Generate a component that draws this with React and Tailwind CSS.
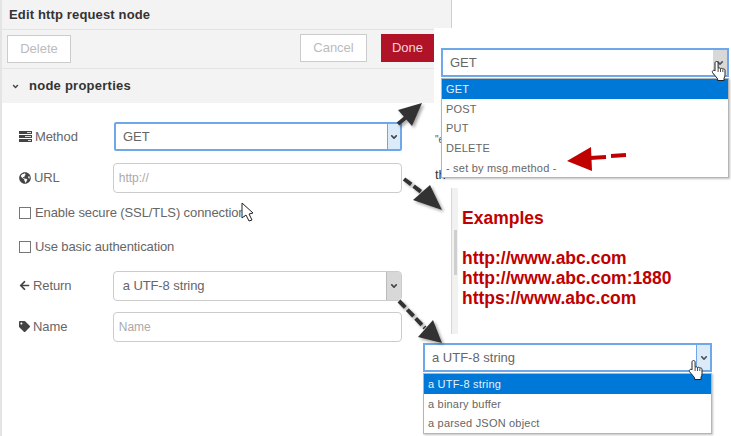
import React from "react";
import { FaGlobeAmericas, FaArrowLeft, FaTag, FaAngleDown } from "react-icons/fa";

const Hand = ({ className }) => (
  <svg className={"absolute " + className} width="17" height="22" viewBox="0 0 17 22">
    <path
      d="M5.5 1.5c1 0 1.6.7 1.6 1.6v5.2c.8-.7 2-.5 2.4.3.8-.6 2-.3 2.3.5.9-.5 2.2 0 2.2 1.2v4.4c0 1.4-.4 2.4-1 3.6v2.2H6.6v-1.8L1.8 13c-.7-.9-.6-1.9.1-2.4.8-.6 1.6-.3 2.2.3l-.1-.1V3.1c0-.9.6-1.6 1.5-1.6z"
      fill="#fff"
      stroke="#222"
      strokeWidth="1"
    />
    <path d="M7.1 8.5v3.5M9.5 8.8v3.2M11.8 9.5v2.5" stroke="#222" strokeWidth="0.8" fill="none" />
  </svg>
);

const TasksIcon = () => (
  <svg width="13" height="11" viewBox="0 0 13 11">
    <rect x="0" y="0" width="13" height="3" fill="#444" />
    <rect x="0" y="4" width="13" height="3" fill="#444" />
    <rect x="0" y="8" width="13" height="3" fill="#444" />
    <rect x="8" y="1" width="4" height="1" fill="#ddd" />
    <rect x="6" y="5" width="6" height="1" fill="#ddd" />
    <rect x="9" y="9" width="3" height="1" fill="#ddd" />
  </svg>
);

const Popout = ({ className, value, arrowClass, options }) => (
  <div className={"absolute " + className}>
    <div className="h-[29px] border-2 border-[#6fa8e8] bg-white flex items-center text-[13px] text-[#666]">
      <span className="flex-1 pl-[7px]">{value}</span>
      <div className={"w-[14px] h-full flex items-center justify-center " + arrowClass}>
        <FaAngleDown className="w-[10px] h-[10px] text-[#555]" />
      </div>
    </div>
    <div className="mt-[1px] border border-[#b5b5b5] bg-white text-[11px] tracking-[0.2px] text-[#666] shadow-[1px_1px_2px_rgba(0,0,0,0.25)]">
      {options.map((o, i) => (
        <div
          key={o}
          className={"h-[19.7px] leading-[20px] pl-[4px] " + (i === 0 ? "bg-[#0078d7] text-[#e8f2fb]" : "")}
        >
          {o}
        </div>
      ))}
    </div>
  </div>
);

const Row = ({ icon, label, children, className }) => (
  <div className={"flex items-center h-[29px] " + className}>
    <div className="w-[94px] flex items-center gap-[3px] text-[13px] tracking-[-0.1px] text-[#666]">
      {icon}
      <span>{label}</span>
    </div>
    {children}
  </div>
);

const Check = ({ label, className }) => (
  <div className={"flex items-center gap-[4px] text-[13px] tracking-[-0.1px] text-[#666] " + className}>
    <div className="w-[12px] h-[12px] border border-[#777] bg-white" />
    <span>{label}</span>
  </div>
);

export default function App() {
  return (
    <div className="relative flex w-[731px] h-[436px] overflow-hidden bg-white font-['Liberation_Sans',sans-serif]">
      {/* editor tray */}
      <div className="w-[434px] shrink-0 border-l-2 border-[#e4e4e4]">
        <div className="h-[30px] bg-[#f3f3f3] border-b border-[#e3e3e3] pl-[7px] flex items-center text-[13px] font-bold tracking-[0.15px] text-[#333]">
          Edit http request node
        </div>
        <div className="h-[39px] bg-[#f3f3f3] border-b border-[#e3e3e3] flex items-center pl-[5px]">
          <button className="w-[64px] h-[28px] border border-[#ccc] bg-white text-[13px] text-[#bbb]">Delete</button>
          <button className="ml-auto w-[67px] h-[28px] border border-[#ccc] bg-white text-[13px] text-[#bbb] -mt-[2px]">Cancel</button>
          <button className="ml-[14px] w-[53px] h-[28px] bg-[#b01327] text-[13px] text-[#f3d5d9] -mt-[2px]">Done</button>
        </div>
        <div className="h-[34px] bg-[#f3f3f3] flex items-center pl-[9px] gap-[9px] text-[13px] font-bold tracking-[0.25px] text-[#333]">
          <FaAngleDown className="w-[9px] h-[9px] text-[#444]" />
          node properties
        </div>

        <div className="pl-[17px] w-[400px] pt-[19px]">
          <Row label="Method" icon={<TasksIcon />}>
            <div className="w-[288px] h-[29px] ml-[1px] rounded-[2px] border-2 border-[#6fa8e8] bg-white flex items-center text-[13px] text-[#666]">
              <span className="flex-1 pl-[7px]">GET</span>
              <div className="w-[13px] h-full bg-[#dcebf9] border-l border-[#6fa8e8] flex items-center justify-center">
                <FaAngleDown className="w-[10px] h-[10px] text-[#444]" />
              </div>
            </div>
          </Row>
          <Row
            label="URL"
            className="mt-[12px]"
            icon={<FaGlobeAmericas className="w-[12px] h-[12px] text-[#444]" />}
          >
            <div className="w-[290px] h-[30px] rounded-[4px] border border-[#ccc] bg-white flex items-center pl-[5px] text-[12px] text-[#aaa]">
              http://
            </div>
          </Row>
          <Check label="Enable secure (SSL/TLS) connection" className="h-[15px] mt-[13px]" />
          <Check label="Use basic authentication" className="h-[15px] mt-[19px]" />
          <Row
            label="Return"
            className="mt-[17px]"
            icon={<FaArrowLeft className="w-[11px] h-[11px] text-[#444]" />}
          >
            <div className="w-[290px] h-[30px] rounded-[4px] border border-[#ccc] bg-white flex items-center text-[13px] tracking-[-0.1px] text-[#666]">
              <span className="flex-1 pl-[9px]">a UTF-8 string</span>
              <div className="w-[15px] h-full bg-[#d8d8d8] border-l border-[#bbb] rounded-r-[3px] flex items-center justify-center">
                <FaAngleDown className="w-[10px] h-[10px] text-[#444]" />
              </div>
            </div>
          </Row>
          <Row
            label="Name"
            className="mt-[12px]"
            icon={<FaTag className="w-[11px] h-[11px] text-[#444]" />}
          >
            <div className="w-[290px] h-[30px] rounded-[4px] border border-[#ccc] bg-white flex items-center pl-[5px] text-[12px] text-[#aaa]">
              Name
            </div>
          </Row>
        </div>
      </div>

      {/* examples column behind the popouts */}
      <div className="flex-1">
        <div className="h-[28px] w-[18px] bg-[#f3f3f3] border-r border-[#cfcfcf]" />
        <div className="mt-[160px] ml-[17px] flex h-[146px]">
          <div className="w-[7px] border-l border-[#d8d8d8] bg-[#f1f1f1]">
            <div className="mt-[42px] mx-auto w-[3px] h-[45px] bg-[#cfcfcf]" />
          </div>
          <div className="pl-[4px] pt-[20px] text-[17.5px] leading-[20px] font-bold text-[#c00000]">
            <div className="mb-[20px]">Examples</div>
            <div>http://www.abc.com</div>
            <div>http://www.abc.com:1880</div>
            <div>https://www.abc.com</div>
          </div>
        </div>
      </div>

      <span className="absolute left-[435px] top-[132px] text-[10px] text-[#555]">"e</span>
      <span className="absolute left-[435px] top-[165px] text-[13px] text-[#333]">th</span>

      <Popout
        className="left-[441px] top-[48px] w-[288px]"
        value="GET"
        arrowClass="bg-[#d8d8d8]"
        options={["GET", "POST", "PUT", "DELETE", "- set by msg.method -"]}
      />
      <Popout
        className="left-[423px] top-[343px] w-[289px]"
        value="a UTF-8 string"
        arrowClass="bg-[#dcebf9] border-l border-[#6fa8e8]"
        options={["a UTF-8 string", "a binary buffer", "a parsed JSON object"]}
      />

      {/* annotation arrows */}
      <svg className="absolute inset-0 pointer-events-none" width="731" height="436" viewBox="0 0 731 436">
        <defs>
          <filter id="sh" x="-30%" y="-30%" width="170%" height="170%">
            <feDropShadow dx="2" dy="2" stdDeviation="1.5" floodColor="#000" floodOpacity="0.35" />
          </filter>
        </defs>
        <g filter="url(#sh)" fill="#333" stroke="#333">
          <line x1="398" y1="124" x2="410" y2="114" strokeWidth="4" />
          <polygon points="422,103 398,110 412,126" strokeWidth="0" />
          <line x1="404" y1="179" x2="424" y2="194" strokeWidth="4" strokeDasharray="9 3" />
          <polygon points="442,210 413,200 430,185" strokeWidth="0" />
          <line x1="399" y1="301" x2="425" y2="328" strokeWidth="4" strokeDasharray="9 3" />
          <polygon points="442,343 418,337 433,320" strokeWidth="0" />
        </g>
        <g fill="#c00000" stroke="#c00000">
          <polygon points="567,161 591,147 592,171" strokeWidth="0" />
          <line x1="590" y1="158" x2="606" y2="157" strokeWidth="4" />
          <line x1="611" y1="156" x2="626" y2="155" strokeWidth="4" />
        </g>
        <path d="M242 203 L242 218 L246 215 L249 221 L252 220 L249 214 L253 213 Z" fill="#fff" stroke="#222" strokeWidth="1" />
      </svg>

      <Hand className="left-[711px] top-[60px]" />
      <Hand className="left-[688px] top-[359px]" />
    </div>
  );
}
